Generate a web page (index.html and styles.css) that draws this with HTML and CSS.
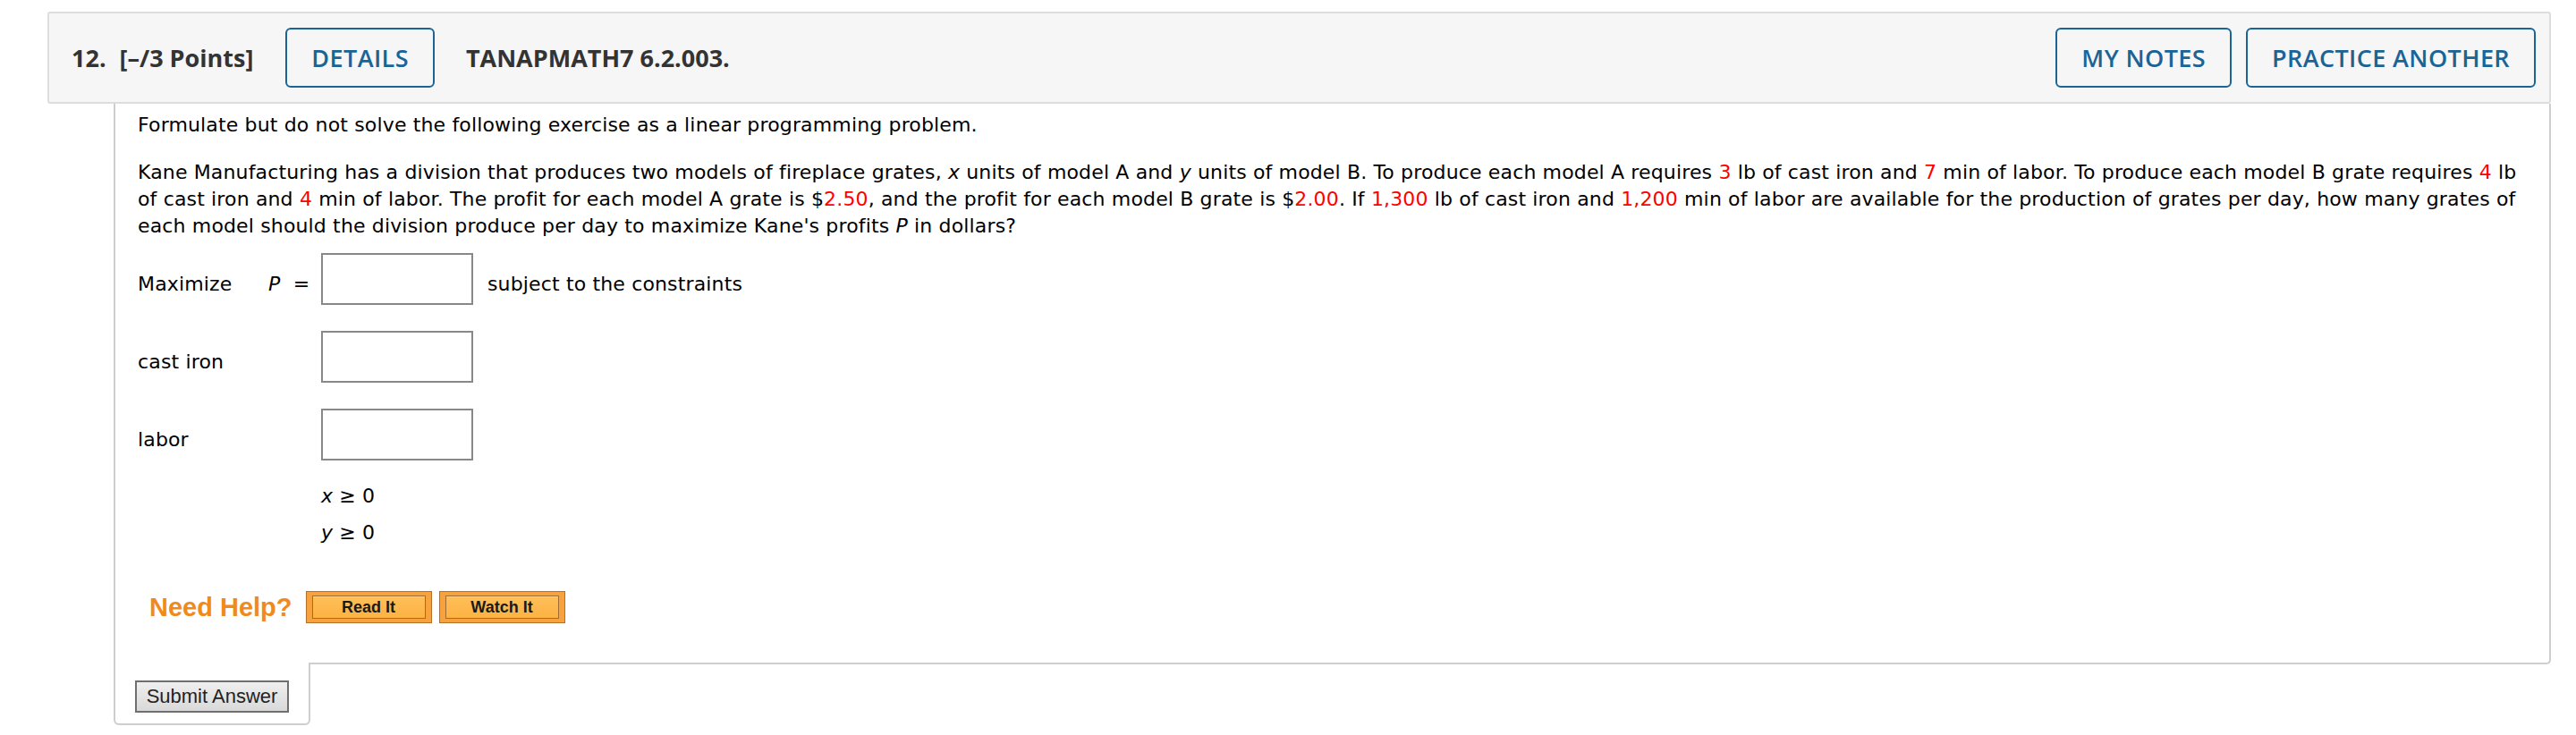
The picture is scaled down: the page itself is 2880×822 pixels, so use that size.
FILE: index.html
```html
<!DOCTYPE html>
<html lang="en">
<head>
<meta charset="utf-8">
<title>Question 12</title>
<link rel="stylesheet" href="styles.css">
</head>
<body>
<div class="page">
  <div class="qhead">
    <span class="qnum">12.</span>
    <span class="qpts">[–/3 Points]</span>
    <button class="hbtn">DETAILS</button>
    <span class="qid">TANAPMATH7 6.2.003.</span>
    <div class="hright">
      <button class="hbtn">MY NOTES</button>
      <button class="hbtn">PRACTICE ANOTHER</button>
    </div>
  </div>
  <div class="qbody">
    <p class="para">Formulate but do not solve the following exercise as a linear programming problem.</p>
    <p class="para">Kane Manufacturing has a division that produces two models of fireplace grates, <i>x</i> units of model A and <i>y</i> units of model B. To produce each model A requires <span class="red">3</span> lb of cast iron and <span class="red">7</span> min of labor. To produce each model B grate requires <span class="red">4</span> lb of cast iron and <span class="red">4</span> min of labor. The profit for each model A grate is $<span class="red">2.50</span>, and the profit for each model B grate is $<span class="red">2.00</span>. If <span class="red">1,300</span> lb of cast iron and <span class="red">1,200</span> min of labor are available for the production of grates per day, how many grates of each model should the division produce per day to maximize Kane's profits <i>P</i> in dollars?</p>
    <div class="lp">
      <div class="lbl">Maximize</div>
      <div class="eq"><i>P</i>&nbsp; =</div>
      <input class="box" type="text">
      <div class="after">subject to the constraints</div>

      <div class="lbl">cast iron</div>
      <div class="eq"></div>
      <input class="box" type="text">
      <div class="after"></div>

      <div class="lbl">labor</div>
      <div class="eq"></div>
      <input class="box" type="text">
      <div class="after"></div>
    </div>
    <div class="nonneg">
      <div class="nn-line"><i>x</i> ≥ 0</div>
      <div class="nn-line"><i>y</i> ≥ 0</div>
    </div>
    <div class="help">
      <span class="help-label">Need Help?</span>
      <button class="hlp-btn"><span class="hlp-inner">Read It</span></button>
      <button class="hlp-btn"><span class="hlp-inner">Watch It</span></button>
    </div>
  </div>
  <div class="submit-tab">
    <button class="submit">Submit Answer</button>
  </div>
</div>
</body>
</html>
```

FILE: styles.css
```css
html, body {
  margin: 0;
  padding: 0;
  background: #ffffff;
}

.page {
  padding: 13px 28px 0 53px;
  font-family: "DejaVu Sans", Verdana, sans-serif;
  color: #000;
}

/* ---------- header ---------- */
.qhead {
  box-sizing: border-box;
  height: 103px;
  display: flex;
  align-items: center;
  background: #f6f6f6;
  border: 2px solid #dddddd;
  border-radius: 3px;
  padding: 0 15px 0 25px;
  font-family: "Open Sans", "Liberation Sans", sans-serif;
  font-size: 27px;
  color: #333333;
}

.qnum {
  font-weight: 700;
  margin-right: 15px;
}

.qpts {
  font-weight: 700;
  margin-right: 36px;
}

.qid {
  font-weight: 700;
  margin-left: 35px;
}

.hright {
  margin-left: auto;
  display: flex;
  gap: 16px;
}

.hbtn {
  box-sizing: border-box;
  height: 67px;
  padding: 0 27px;
  background: transparent;
  border: 2.5px solid #1a6496;
  border-radius: 6px;
  font-family: "Open Sans", "Liberation Sans", sans-serif;
  font-size: 27px;
  letter-spacing: 0.4px;
  font-weight: 600;
  color: #1a6496;
  line-height: 1;
  cursor: pointer;
}

/* ---------- body ---------- */
.qbody {
  margin-left: 74px;
  border: 2px solid #cecece;
  border-top: none;
  border-radius: 0 0 5px 0;
  padding: 9px 24px 44px 25px;
  font-size: 22px;
  line-height: 30px;
  letter-spacing: 0.15px;
}

.para {
  margin: 0 0 23px 0;
}

.red {
  color: #ff0000;
}

.lp {
  margin-top: -8px;
  display: grid;
  grid-template-columns: 146px 59px 170px auto;
  grid-auto-rows: 58px;
  row-gap: 29px;
  align-items: center;
}

.lbl,
.eq,
.after {
  padding-top: 11px;
}

.eq {
  white-space: pre;
}

.box {
  box-sizing: border-box;
  width: 170px;
  height: 58px;
  margin: 0;
  border: 2px solid #888888;
  background: #ffffff;
  font-size: 22px;
}

.after {
  padding-left: 16px;
}

.nonneg {
  margin-top: 25px;
  padding-left: 205px;
  display: flex;
  flex-direction: column;
  gap: 11px;
}

.help {
  margin-top: 50px;
  padding-left: 13px;
  display: flex;
  align-items: center;
  gap: 8px;
}

.help-label {
  font-family: "Liberation Sans", Arial, sans-serif;
  font-weight: 700;
  font-size: 29px;
  letter-spacing: 0;
  color: #f08a1c;
  margin-right: 7px;
}

.hlp-btn {
  box-sizing: border-box;
  width: 141px;
  height: 36px;
  padding: 4px 6px;
  border: 1px solid #b5702c;
  background: #f7a23c;
  cursor: pointer;
}

.hlp-inner {
  box-sizing: border-box;
  display: flex;
  align-items: center;
  justify-content: center;
  height: 100%;
  border: 1px solid #a06b34;
  background: linear-gradient(#ffbf58, #fdb244);
  box-shadow: inset 0 1px 0 #ffd590;
  font-family: "Liberation Sans", Arial, sans-serif;
  font-weight: 700;
  font-size: 18px;
  letter-spacing: 0;
  color: #1a1a1a;
}

/* ---------- submit tab ---------- */
.submit-tab {
  box-sizing: border-box;
  width: 220px;
  margin-left: 74px;
  margin-top: -2px;
  background: #ffffff;
  border: 2px solid #cecece;
  border-top: none;
  border-radius: 0 0 6px 6px;
  padding: 20px 0 12px 22px;
}

.submit {
  box-sizing: border-box;
  width: 172px;
  height: 36px;
  padding: 0;
  border: 2px solid #6f6f6f;
  background: linear-gradient(#efefef, #d9d9d9);
  font-family: "Liberation Sans", Arial, sans-serif;
  font-size: 22px;
  color: #222222;
  cursor: pointer;
}
```
